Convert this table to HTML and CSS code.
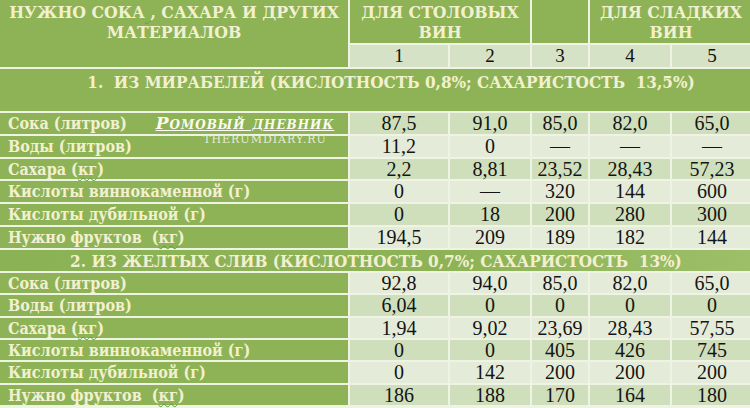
FILE: index.html
```html
<!DOCTYPE html>
<html lang="ru">
<head>
<meta charset="utf-8">
<link rel="stylesheet" href="styles.css">
</head>
<body>
<div class="sheet">
  <div class="hd hd-main">НУЖНО СОКА<span class="sq">&nbsp;</span>, САХАРА И ДРУГИХ<br>МАТЕРИАЛОВ</div>
  <div class="hd hd-table">ДЛЯ СТОЛОВЫХ<br>ВИН</div>
  <div class="hd hd-empty"></div>
  <div class="hd hd-sweet">ДЛЯ СЛАДКИХ<br>ВИН</div>
  <div class="num">1</div><div class="num">2</div><div class="num">3</div><div class="num">4</div><div class="num">5</div>

  <div class="sec sec1">1.&nbsp;&nbsp;ИЗ МИРАБЕЛЕЙ (КИСЛОТНОСТЬ 0,8%; САХАРИСТОСТЬ&nbsp; 13,5%)</div>

  <div class="lbl">Сока (литров)</div><div class="c d">87,5</div><div class="c d">91,0</div><div class="c d">85,0</div><div class="c d">82,0</div><div class="c d">65,0</div>
  <div class="lbl">Воды (литров)</div><div class="c l">11,2</div><div class="c l">0</div><div class="c l">—</div><div class="c l">—</div><div class="c l">—</div>
  <div class="lbl">Сахара (<span class="sq">кг</span>)</div><div class="c d">2,2</div><div class="c d">8,81</div><div class="c d">23,52</div><div class="c d">28,43</div><div class="c d">57,23</div>
  <div class="lbl">Кислоты виннокаменной (г)</div><div class="c l">0</div><div class="c l">—</div><div class="c l">320</div><div class="c l">144</div><div class="c l">600</div>
  <div class="lbl">Кислоты дубильной (г)</div><div class="c d">0</div><div class="c d">18</div><div class="c d">200</div><div class="c d">280</div><div class="c d">300</div>
  <div class="lbl">Нужно фруктов&nbsp; (<span class="sq">кг</span>)</div><div class="c l">194,5</div><div class="c l">209</div><div class="c l">189</div><div class="c l">182</div><div class="c l">144</div>

  <div class="sec sec2">2. ИЗ ЖЕЛТЫХ СЛИВ (КИСЛОТНОСТЬ 0,7%; САХАРИСТОСТЬ&nbsp; 13%)</div>

  <div class="lbl">Сока (литров)</div><div class="c l">92,8</div><div class="c l">94,0</div><div class="c l">85,0</div><div class="c l">82,0</div><div class="c l">65,0</div>
  <div class="lbl">Воды (литров)</div><div class="c d">6,04</div><div class="c d">0</div><div class="c d">0</div><div class="c d">0</div><div class="c d">0</div>
  <div class="lbl">Сахара (<span class="sq">кг</span>)</div><div class="c l">1,94</div><div class="c l">9,02</div><div class="c l">23,69</div><div class="c l">28,43</div><div class="c l">57,55</div>
  <div class="lbl">Кислоты виннокаменной (г)</div><div class="c d">0</div><div class="c d">0</div><div class="c d">405</div><div class="c d">426</div><div class="c d">745</div>
  <div class="lbl">Кислоты дубильной (г)</div><div class="c l">0</div><div class="c l">142</div><div class="c l">200</div><div class="c l">200</div><div class="c l">200</div>
  <div class="lbl">Нужно фруктов&nbsp; (<span class="sq">кг</span>)</div><div class="c d">186</div><div class="c d">188</div><div class="c d">170</div><div class="c d">164</div><div class="c d">180</div>

  <div class="wm">
    <div class="wm-title">Ромовый дневник</div>
    <div class="wm-url">THERUMDIARY.RU</div>
  </div>
</div>
</body>
</html>
```
FILE: styles.css
```css
html, body {
  margin: 0;
  padding: 0;
  background: #8db356;
}
body {
  width: 750px;
  height: 408px;
  overflow: hidden;
}
.sheet {
  position: relative;
  display: grid;
  grid-template-columns: 348px 98px 80px 56px 80px 80px;
  grid-template-rows: 43px 22px 42px repeat(6, 20.8px) 21px repeat(6, 20.4px);
  column-gap: 2px;
  row-gap: 2px;
  background: #eef3e3;
  width: 750px;
  height: 420px;
}
.hd {
  background: #8db356;
  color: #f3f0d0;
  font-family: "DejaVu Serif Condensed", "DejaVu Serif", serif;
  font-weight: bold;
  font-size: 17.5px;
  line-height: 20px;
  text-align: center;
  padding-top: 2px;
}
.hd-main {
  grid-row: 1 / span 2;
  grid-column: 1;
}
.hd-table { grid-column: 2 / span 2; }
.hd-empty { grid-column: 4; }
.hd-sweet { grid-column: 5 / span 2; }
.num {
  background: #d6e2c6;
  color: #111;
  font-family: "Liberation Serif", serif;
  font-size: 19px;
  line-height: 22px;
  text-align: center;
}
.sec {
  grid-column: 1 / -1;
  background: #8db356;
  color: #f3f0d0;
  font-family: "DejaVu Serif Condensed", "DejaVu Serif", serif;
  font-weight: bold;
  font-size: 17px;
  line-height: 20px;
  text-align: center;
}
.sec1 {
  padding-top: 3px;
  padding-left: 30px;
}
.sec2 {
  line-height: 22px;
  background: linear-gradient(90deg, #8bb254 0%, #8db356 60%, #9cbf68 100%);
}
.lbl {
  background: #8db356;
  color: #f3f0d0;
  font-family: "DejaVu Serif Condensed", "DejaVu Serif", serif;
  font-weight: bold;
  font-size: 16px;
  line-height: 21px;
  padding-left: 8px;
  white-space: nowrap;
}
.c {
  color: #141414;
  font-family: "Liberation Serif", serif;
  font-size: 20px;
  line-height: 21px;
  text-align: center;
}
.d { background: #cfdfbb; }
.l { background: #e4ecd9; }
.sq {
  text-decoration: underline wavy #5d9a3a;
  text-decoration-thickness: 1px;
  text-underline-offset: 2px;
}
.wm {
  position: absolute;
  left: 150px;
  top: 113px;
  width: 190px;
  text-align: center;
  pointer-events: none;
  white-space: nowrap;
}
.wm-title {
  font-family: "DejaVu Serif", serif;
  font-style: italic;
  font-weight: bold;
  font-variant: small-caps;
  font-size: 17px;
  letter-spacing: 1px;
  line-height: 21px;
  color: #fbfbf0;
  text-decoration: underline;
  text-decoration-thickness: 1px;
  text-underline-offset: 1px;
}
.wm-url {
  font-family: "DejaVu Serif", serif;
  font-size: 11px;
  letter-spacing: 1px;
  line-height: 12px;
  color: #e8ecd6;
  padding-left: 40px;
}
```
